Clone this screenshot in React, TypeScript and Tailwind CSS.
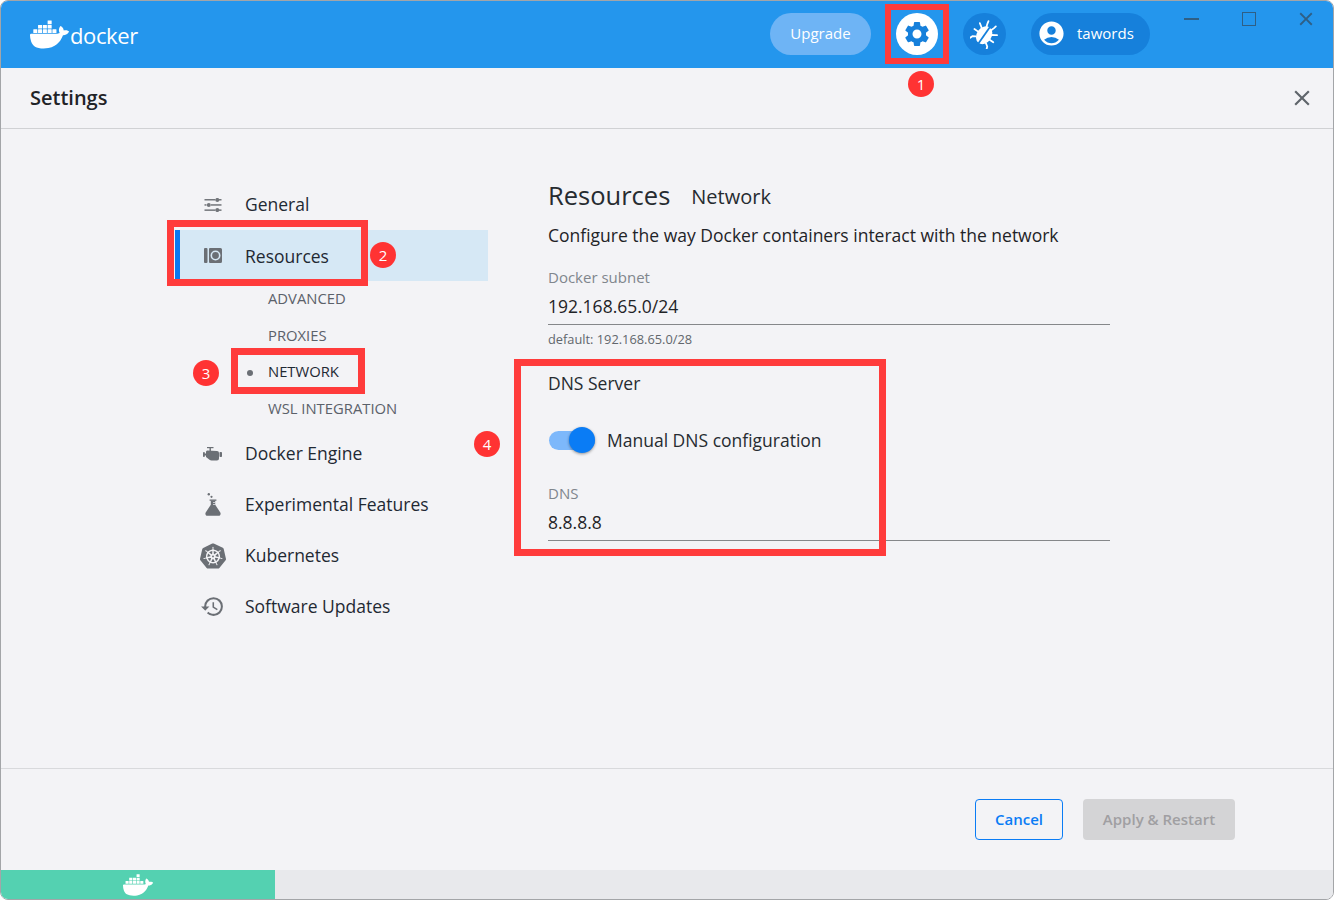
import React from "react";
import { MdSettings, MdAccountCircle, MdHistory, MdClose } from "react-icons/md";
import { SiDocker, SiKubernetes } from "react-icons/si";

const TuneIcon = () => (
  <svg width="18" height="14" viewBox="0 0 18 14" fill="#73767b">
    <rect x="0.500" y="1" width="11" height="1.500" />
    <rect x="15" y="1" width="2.500" height="1.500" />
    <circle cx="13.300" cy="1.900" r="2" />
    <rect x="0.500" y="6.200" width="2" height="1.500" />
    <rect x="7" y="6.200" width="10.500" height="1.500" />
    <circle cx="4.800" cy="7" r="2" />
    <rect x="0.500" y="11.400" width="11" height="1.500" />
    <rect x="15" y="11.400" width="2.500" height="1.500" />
    <circle cx="13.300" cy="12.100" r="2" />
  </svg>
);

const DiskIcon = () => (
  <svg width="18" height="15" viewBox="0 0 18 15">
    <rect x="0" y="0" width="3.500" height="15" rx="1" fill="#6b6f75" />
    <path fillRule="evenodd" fill="#6b6f75" d="M6 0h10.500A1.500 1.500 0 0 1 18 1.500v12a1.500 1.500 0 0 1-1.500 1.500H6a1 1 0 0 1-1-1V1a1 1 0 0 1 1-1zm5.500 2.500a5 5 0 1 0 0 10 5 5 0 0 0 0-10zm0 1.600a3.400 3.400 0 1 1 0 6.800 3.400 3.400 0 0 1 0-6.800z" />
    <circle cx="11.500" cy="7.500" r="1.700" fill="#6b6f75" />
  </svg>
);

const EngineIcon = () => (
  <svg width="19" height="14" viewBox="0 0 19 14" fill="#6b6f75">
    <rect x="4" y="0" width="6.500" height="1.200" />
    <rect x="6.500" y="1" width="1.400" height="3" />
    <path d="M4 3.500l10 .5a2 2 0 0 1 2 2v5.500a2 2 0 0 1-2 2H8.500a3 3 0 0 1-2-.8L3 10V4.500z" />
    <rect x="0" y="5" width="1.800" height="5" rx=".8" />
    <rect x="16.500" y="5" width="2.500" height="5" rx=".8" />
    <rect x="1" y="6.500" width="3" height="2" />
  </svg>
);

const FlaskIcon = () => (
  <svg width="16" height="23" viewBox="0 0 16 23" fill="#6b6f75">
    <circle cx="3.800" cy="1.300" r="1.200" />
    <circle cx="6.500" cy="3.800" r="1.100" />
    <rect x="4.600" y="6.500" width="6.800" height="1.300" />
    <path d="M5.800 7.500h4.400v4.200l5.100 7.800c.8 1.400 0 3.300-1.700 3.300H2.400C.7 22.800-.1 20.900.7 19.500l5.100-7.800z" />
    <rect x="8" y="9.200" width="2.200" height=".7" fill="#f3f3f6" />
    <rect x="8" y="11.200" width="2.200" height=".7" fill="#f3f3f6" />
  </svg>
);

const BugIcon = () => (
  <svg width="30" height="30" viewBox="-15 -15 30 30">
    <g transform="rotate(35)">
      <ellipse cx="0" cy="1.500" rx="7.500" ry="9.500" fill="#fff" />
      <g stroke="#fff" strokeWidth="1.800" fill="none" strokeLinecap="round">
        <path d="M-3 -7l-1 -3l-.5 -2.500" />
        <path d="M3 -7l1 -3l.5 -2.500" />
        <path d="M-6 -3l-3 -2l-1.500 -1" />
        <path d="M6 -3l3 -2l1.500 -1" />
        <path d="M-7 2h-4.500" />
        <path d="M7 2h4.500" />
        <path d="M-6 7l-3 2l-1 2.500" />
        <path d="M6 7l3 2l1 2.500" />
      </g>
      <rect x="-0.900" y="-12" width="1.800" height="25" fill="#1680db" />
    </g>
  </svg>
);

const Item = ({ icon, label, active }: { icon: React.ReactNode; label: string; active?: boolean }) => (
  <div className={`flex h-[51px] items-center ${active ? "border-l-[5px] border-[#0a78f0] bg-[#d6e8f5]" : "border-l-[5px] border-transparent"}`}>
    <div className="flex w-[65px] shrink-0 items-center justify-center">{icon}</div>
    <span className={`text-[17.500px] leading-none text-[#1f2933] ${active ? "mt-[2px]" : ""}`}>{label}</span>
  </div>
);

const Sub = ({ label, dark, dot, h }: { label: string; dark?: boolean; dot?: boolean; h: string }) => (
  <div className={`flex items-center pl-[93px] ${h}`}>
    {dot && <span className="absolute ml-[-21px] h-[6px] w-[6px] rounded-full bg-[#6b6f75]" />}
    <span className={`mb-[2px] text-[14.800px] leading-none ${dark ? "text-[#1f2933]" : "text-[#5b616a]"}`}>{label}</span>
  </div>
);

const Badge = ({ n, cls }: { n: string; cls: string }) => (
  <div className={`absolute flex h-[26px] w-[26px] items-center justify-center rounded-full bg-[#ff3333] text-[15px] leading-none text-white ${cls}`}>{n}</div>
);

export default function App() {
  return (
    <div className="relative h-[900px] w-[1334px] overflow-hidden bg-white" style={{ fontFamily: '"Open Sans", sans-serif' }}>
      <div className="flex h-[900px] w-[1334px] flex-col overflow-hidden rounded-[8px] border border-[#a3a5a8] bg-[#f3f3f6]">
        {/* Header */}
        <header className="flex h-[67px] shrink-0 items-center bg-[#2496ed] pl-[29px]">
          <div className="flex items-center text-white">
            <SiDocker className="h-[39px] w-[39px]" />
            <span className="ml-[1px] mt-[1px] text-[22px] font-normal leading-none tracking-[-0.4px]">docker</span>
          </div>
          <div className="flex-1" />
          <div className="mb-[2px] flex items-center">
            <div className="flex h-[42px] w-[101px] items-center justify-center rounded-full bg-[#6eb4f5] text-[15px] text-white">Upgrade</div>
            <div className="ml-[25px] flex h-[42px] w-[42px] items-center justify-center rounded-full bg-white">
              <MdSettings className="h-[30px] w-[30px] text-[#1680db]" />
            </div>
            <div className="ml-[25px] flex h-[42px] w-[43px] items-center justify-center overflow-hidden rounded-full bg-[#1680db]">
              <BugIcon />
            </div>
            <div className="ml-[25px] flex h-[42px] w-[119px] items-center rounded-full bg-[#1680db] pl-[6px] text-white">
              <MdAccountCircle className="h-[29px] w-[29px]" />
              <span className="ml-[11px] text-[15px]">tawords</span>
            </div>
          </div>
          <div className="flex h-full w-[183px] items-start">
            <div className="ml-[34px] mt-[17px] h-[1.500px] w-[15px] bg-[#2f5f85]" />
            <div className="ml-[43px] mt-[11px] h-[14px] w-[14px] border-[1.500px] border-[#2f5f85]" />
            <MdClose className="ml-[39px] mt-[7px] h-[22px] w-[22px] text-[#2f5f85]" />
          </div>
        </header>

        {/* Title */}
        <div className="flex h-[61px] shrink-0 items-center justify-between border-b border-[#d0d1d4] pl-[29px] pr-[18px]">
          <span className="text-[20px] font-semibold leading-none text-[#1f2327]">Settings</span>
          <MdClose className="h-[26px] w-[26px] text-[#5f656b]" />
        </div>

        {/* Body */}
        <main className="flex min-h-0 flex-1 pl-[174px] pt-[50px]">
          <nav className="w-[313px] shrink-0">
            <Item icon={<TuneIcon />} label="General" />
            <Item icon={<DiskIcon />} label="Resources" active />
            <div className="pb-[1px]">
              <Sub label="ADVANCED" h="h-[37px]" />
              <Sub label="PROXIES" h="h-[36px]" />
              <Sub label="NETWORK" dark dot h="h-[37px]" />
              <Sub label="WSL INTEGRATION" h="h-[36px]" />
            </div>
            <Item icon={<EngineIcon />} label="Docker Engine" />
            <Item icon={<FlaskIcon />} label="Experimental Features" />
            <Item icon={<SiKubernetes className="h-[26px] w-[26px] text-[#6b6f75]" />} label="Kubernetes" />
            <Item icon={<MdHistory className="h-[25px] w-[25px] text-[#6b6f75]" />} label="Software Updates" />
          </nav>

          <section className="ml-[60px] w-[562px]">
            <div className="flex h-[33px] items-center">
              <span className="text-[25.500px] leading-none text-[#262b30]">Resources</span>
              <span className="ml-[21px] mt-[3px] text-[20px] leading-none text-[#262b30]">Network</span>
            </div>
            <p className="mt-[9px] text-[17.500px] leading-[28px] text-[#1f2327]">Configure the way Docker containers interact with the network</p>
            <div className="mt-[18px] text-[15px] leading-[20px] text-[#80868d]">Docker subnet</div>
            <div className="mt-[5px] h-[33px] border-b border-[#85878a] text-[17.500px] leading-[28px] text-[#1f2327]">192.168.65.0/24</div>
            <div className="mt-[6px] text-[12.800px] leading-[16px] text-[#62676d]">default: 192.168.65.0/28</div>
            <div className="mt-[22px] text-[17.500px] leading-[28px] text-[#262b30]">DNS Server</div>
            <div className="mt-[29px] flex h-[28px] items-center">
              <div className="flex h-[26px] w-[47px] items-center justify-end">
                <div className="flex h-[19px] w-[46px] items-center justify-end rounded-full bg-[#7db8fb]">
                  <span className="h-[26px] w-[26px] rounded-full bg-[#0a7cf5] shadow-[0_1px_3px_rgba(0,0,0,0.4)]" />
                </div>
              </div>
              <span className="ml-[12px] mt-[2px] text-[17.500px] leading-none text-[#262b30]">Manual DNS configuration</span>
            </div>
            <div className="mt-[29px] text-[15px] leading-[20px] text-[#80868d]">DNS</div>
            <div className="mt-[5px] h-[33px] border-b border-[#85878a] text-[17.500px] leading-[28px] text-[#1f2327]">8.8.8.8</div>
          </section>
        </main>

        {/* Footer */}
        <footer className="flex h-[102px] shrink-0 items-start justify-end gap-[20px] border-t border-[#d8d9dc] pr-[98px] pt-[30px]">
          <div className="flex h-[41px] w-[88px] items-center justify-center rounded-[4px] border border-[#0a7cf5] text-[15px] font-semibold text-[#0a7cf5]">Cancel</div>
          <div className="flex h-[41px] w-[152px] items-center justify-center rounded-[4px] bg-[#d4d4d6] text-[15px] font-semibold text-[#a09fa2]">Apply &amp; Restart</div>
        </footer>

        {/* Status bar */}
        <div className="flex h-[29px] shrink-0 bg-[#e8e9ec]">
          <div className="flex w-[274px] items-center justify-center bg-[#54d1b1]">
            <SiDocker className="h-[30px] w-[30px] text-white" />
          </div>
        </div>
      </div>

      {/* Annotations */}
      <div className="absolute left-[885px] top-[4px] h-[60px] w-[64px] border-[6px] border-[#ff3b3b]" />
      <div className="absolute left-[167px] top-[220px] h-[66px] w-[201px] border-[7px] border-[#ff3b3b]" />
      <div className="absolute left-[231px] top-[348px] h-[46px] w-[134px] border-[7px] border-[#ff3b3b]" />
      <div className="absolute left-[514px] top-[359px] h-[197px] w-[372px] border-[7px] border-[#ff3b3b]" />
      <Badge n="1" cls="left-[908px] top-[71px]" />
      <Badge n="2" cls="left-[370px] top-[242px]" />
      <Badge n="3" cls="left-[193px] top-[360px]" />
      <Badge n="4" cls="left-[474px] top-[431px]" />
    </div>
  );
}
